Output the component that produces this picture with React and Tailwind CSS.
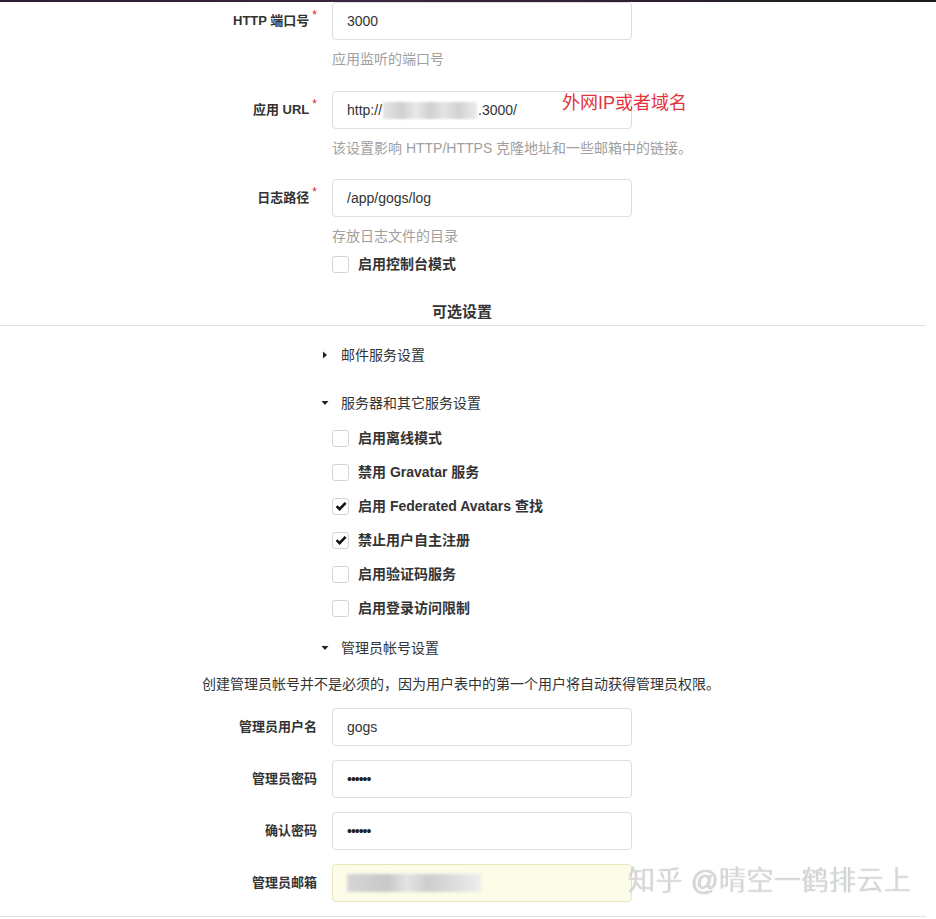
import React from "react";

const font = "font-['Liberation_Sans','Noto_Sans_CJK_SC',sans-serif]";

function Field({ label, required, children, className = "" }) {
  return (
    <div className={`relative flex h-[38px] items-center ${className}`}>
      <div className="flex w-[317px] justify-end text-[13px] font-bold text-[#333]">
        <span>{label}</span>
        {required && <span className="relative -top-[5px] ml-[3px] text-[12px] font-normal text-[#db2828]">*</span>}
      </div>
      {children}
    </div>
  );
}

function Input({ children, yellow }) {
  return (
    <div
      className={`ml-[15px] flex h-[38px] w-[300px] items-center rounded-[4px] border px-[14px] text-[14px] text-[#333] ${
        yellow ? "border-[#e8e5c0] bg-[#fcfce8]" : "border-[#dedede] bg-white"
      }`}
    >
      {children}
    </div>
  );
}

function Help({ children, className = "" }) {
  return <div className={`ml-[332px] h-[18px] text-[14px] leading-[18px] text-[#a0a0a0] ${className}`}>{children}</div>;
}

function Box({ checked }) {
  return (
    <span className="flex h-[17px] w-[17px] items-center justify-center rounded-[3px] border border-[#d4d4d5] bg-white">
      {checked && (
        <svg viewBox="0 0 12 12" className="h-[12px] w-[12px]">
          <path d="M1.6 6.2 L4.6 9.2 L10.6 2.8" fill="none" stroke="#111" strokeWidth="2.6" />
        </svg>
      )}
    </span>
  );
}

function Check({ label, checked, className = "" }) {
  return (
    <div className={`ml-[332px] flex h-[17px] items-center gap-[9px] ${className}`}>
      <Box checked={checked} />
      <span className="text-[14px] font-semibold leading-[17px] text-[#333]">{label}</span>
    </div>
  );
}

function Summary({ label, open, className = "" }) {
  return (
    <div className={`ml-[321px] flex h-[20px] items-center text-[14px] leading-[20px] text-[#333] ${className}`}>
      <span className="flex w-[20px] items-center">
        {open ? (
          <svg viewBox="0 0 8 8" className="h-[8px] w-[8px]">
            <path d="M0.5 2 L7.5 2 L4 6 Z" fill="#222" />
          </svg>
        ) : (
          <svg viewBox="0 0 8 8" className="h-[8px] w-[8px]">
            <path d="M2 0.5 L6 4 L2 7.5 Z" fill="#222" />
          </svg>
        )}
      </span>
      <span>{label}</span>
    </div>
  );
}

function Dots() {
  return <span className="text-[14px] tracking-[-1px] text-[#222]">••••••</span>;
}

export default function App() {
  return (
    <div className={`relative min-h-[919px] w-[936px] overflow-hidden bg-white ${font}`}>
      <div className="h-[2px] bg-[linear-gradient(90deg,#2a2030,#3a2540_40%,#1c1c1c)]" />

      <Field label="HTTP 端口号" required>
        <Input>3000</Input>
      </Field>
      <Help className="mt-[10px]">应用监听的端口号</Help>

      <Field label="应用 URL" required className="mt-[23px]">
        <Input>
          <span>http://</span>
          <span className="mx-[1px] h-[17px] w-[94px] bg-[linear-gradient(90deg,#e6e6e6,#cfcfcf_20%,#e9e9e9_35%,#d0d0d0_50%,#e4e4e4_65%,#d2d2d2_80%,#ececec)] blur-[1px]" />
          <span>.3000/</span>
        </Input>
        <span className="absolute left-[562px] top-[0px] text-[18px] leading-[24px] text-[#e3343d]">外网IP或者域名</span>
      </Field>
      <Help className="mt-[10px]">该设置影响 HTTP/HTTPS 克隆地址和一些邮箱中的链接。</Help>

      <Field label="日志路径" required className="mt-[22px]">
        <Input>/app/gogs/log</Input>
      </Field>
      <Help className="mt-[10px]">存放日志文件的目录</Help>
      <Check label="启用控制台模式" className="mt-[11px]" />

      <div className="mt-[29px] h-[20px] text-center text-[15px] font-bold leading-[20px] text-[#333]">
        <span className="ml-[-12px]">可选设置</span>
      </div>
      <div className="mt-[3px] h-px w-[926px] bg-[#e0e0e0]" />

      <Summary label="邮件服务设置" className="mt-[19px]" />
      <Summary label="服务器和其它服务设置" open className="mt-[28px]" />

      <div className="mt-[8px] flex flex-col">
        {[
          ["启用离线模式", false],
          ["禁用 Gravatar 服务", false],
          ["启用 Federated Avatars 查找", true],
          ["禁止用户自主注册", true],
          ["启用验证码服务", false],
          ["启用登录访问限制", false],
        ].map(([label, checked]) => (
          <div key={label} className="flex h-[34px] items-center">
            <Check label={label} checked={checked} />
          </div>
        ))}
      </div>

      <Summary label="管理员帐号设置" open className="mt-[13px]" />
      <div className="mt-[16px] ml-[202px] h-[20px] text-[14px] leading-[20px] text-[#333]">
        创建管理员帐号并不是必须的，因为用户表中的第一个用户将自动获得管理员权限。
      </div>

      <Field label="管理员用户名" className="mt-[14px]">
        <Input>gogs</Input>
      </Field>
      <Field label="管理员密码" className="mt-[14px]">
        <Input>
          <Dots />
        </Input>
      </Field>
      <Field label="确认密码" className="mt-[14px]">
        <Input>
          <Dots />
        </Input>
      </Field>
      <Field label="管理员邮箱" className="mt-[14px]">
        <Input yellow>
          <span className="h-[18px] w-[134px] bg-[linear-gradient(90deg,#d6d6d6,#c8c8c8_30%,#e4e4e4_45%,#cdcdcd_60%,#dcdcdc_80%,#eeeeee)] blur-[1.5px]" />
        </Input>
      </Field>
      <div className="mt-[14px] h-px w-[926px] bg-[#e0e0e0]" />

      <div className="absolute left-[628px] top-[863px] text-[27px] font-light leading-[36px] tracking-[0.5px] text-[#dcdcdc] [text-shadow:0_0_1px_#9a9a9a]">
        知乎 @晴空一鹤排云上
      </div>
    </div>
  );
}
